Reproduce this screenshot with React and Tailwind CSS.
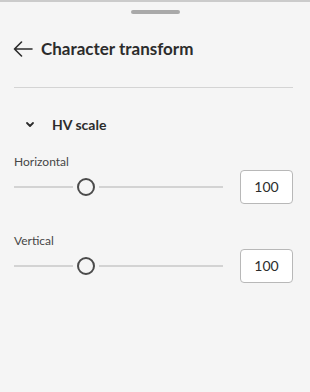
import React from "react";

// Slider row: label, track with thumb, and numeric field
const ScaleRow = ({ label, value }) => {
  return (
    <div className="flex flex-col">
      <div className="text-[12px] leading-[14px] text-[#464646]">{label}</div>
      <div className="mt-[1px] flex items-center">
        <div className="relative h-[34px] w-[209px]">
          {/* track left of thumb */}
          <div className="absolute left-0 top-[16px] h-[2px] w-[59px] bg-[#d3d3d3]" />
          {/* track right of thumb */}
          <div className="absolute left-[85px] top-[16px] h-[2px] w-[124px] bg-[#d3d3d3]" />
          {/* thumb */}
          <div className="absolute left-[63px] top-[8px] h-[18px] w-[18px] rounded-full border-2 border-[#4b4b4b] bg-[#f5f5f5]" />
        </div>
        <div className="ml-[17px] flex h-[34px] w-[53px] items-center justify-center rounded-[4px] border border-[#b8b8b8] bg-white text-[14px] text-[#2c2c2c]">
          {value}
        </div>
      </div>
    </div>
  );
};

export default function App() {
  return (
    <div
      className="h-[392px] w-[310px] border-t-2 border-[#cbcbcb] bg-[#f5f5f5]"
      style={{ fontFamily: "Lato, 'Noto Sans', sans-serif" }}
    >
      {/* drag handle */}
      <div className="mx-auto mt-[8px] h-[4px] w-[49px] rounded-full bg-[#a9a9a9]" />

      {/* header */}
      <div className="mt-[22px] flex items-center pl-[13px]">
        <svg width="20" height="16" viewBox="0 0 20 16" fill="none" stroke="#2c2c2c" strokeWidth="1.6" strokeLinecap="round" strokeLinejoin="round">
          <path d="M19 8H1.5M8.5 1L1.5 8l7 7" />
        </svg>
        <span className="ml-[8px] text-[17px] font-bold text-[#2c2c2c]">Character transform</span>
      </div>

      {/* divider */}
      <div className="ml-[14px] mr-[17px] mt-[25px] h-px bg-[#d4d4d4]" />

      {/* section */}
      <div className="mt-[26px] flex items-center pl-[25px]">
        <svg width="10" height="7" viewBox="0 0 10 7" fill="none" stroke="#2c2c2c" strokeWidth="1.8" strokeLinecap="round" strokeLinejoin="round">
          <path d="M2 2l3 3 3-3" />
        </svg>
        <span className="ml-[17px] text-[14px] font-bold text-[#2c2c2c]">HV scale</span>
      </div>

      <div className="mt-[20px] flex flex-col gap-[30px] pl-[14px] pr-[17px]">
        <ScaleRow label="Horizontal" value="100" />
        <ScaleRow label="Vertical" value="100" />
      </div>
    </div>
  );
}
